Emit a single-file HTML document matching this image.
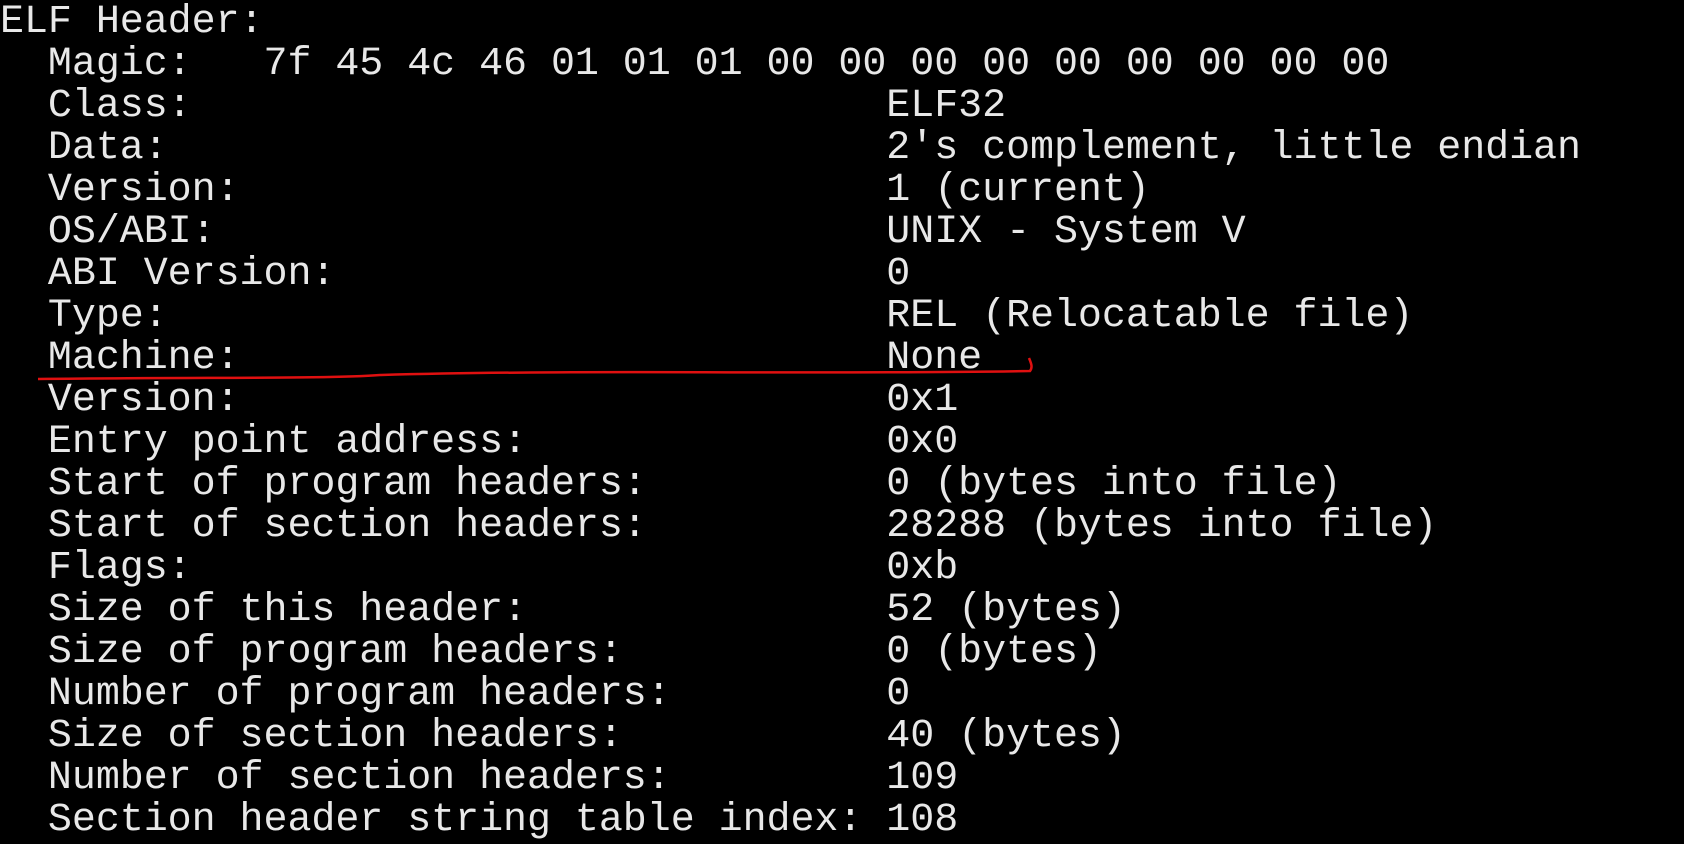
<!DOCTYPE html>
<html><head><meta charset="utf-8"><style>
html,body{margin:0;padding:0;background:#000;width:1684px;height:844px;overflow:hidden}
pre{margin:0;position:absolute;left:0;top:2px;color:#e8e8e8;font-family:"Liberation Mono","DejaVu Sans Mono",monospace;font-size:40px;line-height:42px;letter-spacing:-0.05px}
svg{position:absolute;left:0;top:0}
</style></head><body>
<pre>ELF Header:
  Magic:   7f 45 4c 46 01 01 01 00 00 00 00 00 00 00 00 00
  Class:                             ELF32
  Data:                              2's complement, little endian
  Version:                           1 (current)
  OS/ABI:                            UNIX - System V
  ABI Version:                       0
  Type:                              REL (Relocatable file)
  Machine:                           None
  Version:                           0x1
  Entry point address:               0x0
  Start of program headers:          0 (bytes into file)
  Start of section headers:          28288 (bytes into file)
  Flags:                             0xb
  Size of this header:               52 (bytes)
  Size of program headers:           0 (bytes)
  Number of program headers:         0
  Size of section headers:           40 (bytes)
  Number of section headers:         109
  Section header string table index: 108</pre>
<svg width="1684" height="844"><path d="M38 379 C200 377 330 379 380 375 C600 369 800 375 1030 371 C1033 367 1031 363 1029 358" stroke="#e01010" stroke-width="2.5" fill="none"/></svg>
</body></html>
